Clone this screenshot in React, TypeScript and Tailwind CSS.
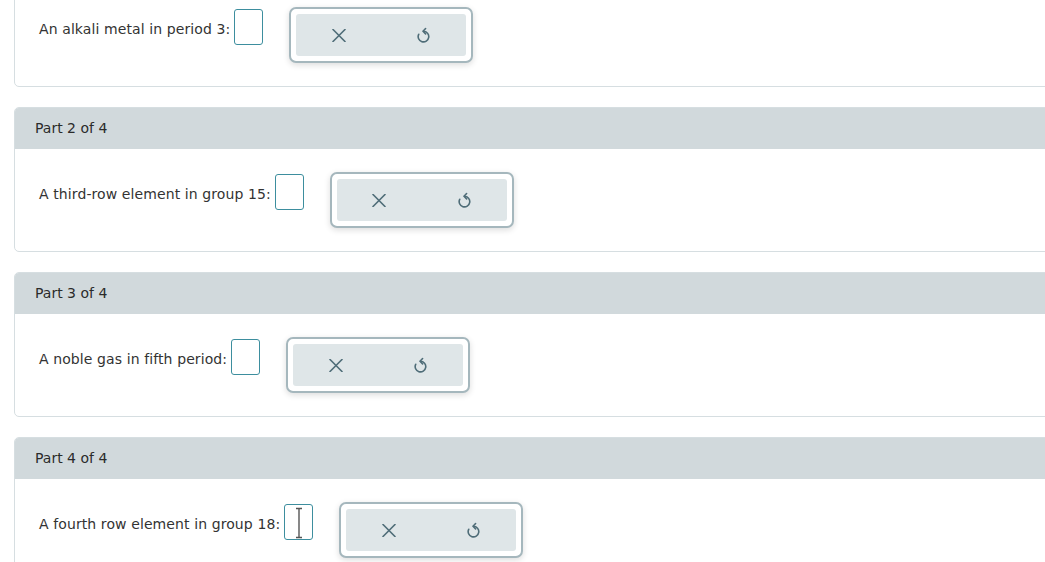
import React from "react";

type Part = {
  label: string;
  prompt: string;
  cursor?: boolean;
};

const parts: Part[] = [
  { label: "Part 1 of 4", prompt: "An alkali metal in period 3:" },
  { label: "Part 2 of 4", prompt: "A third-row element in group 15:" },
  { label: "Part 3 of 4", prompt: "A noble gas in fifth period:" },
  { label: "Part 4 of 4", prompt: "A fourth row element in group 18:", cursor: true },
];

function ClearIcon() {
  return (
    <svg width="14" height="13" viewBox="0 0 14 13" fill="none">
      <path d="M1 0.5 L13 12.5 M13 0.5 L1 12.5" stroke="#4f6d78" strokeWidth="1.6" strokeLinecap="round" />
    </svg>
  );
}

function UndoIcon() {
  return (
    <svg width="13" height="16" viewBox="0 0 13 16" fill="none">
      <path
        d="M6.5 4.3 A5.3 5.3 0 1 1 1.7 7.3"
        stroke="#4f6d78"
        strokeWidth="1.6"
        strokeLinecap="round"
      />
      <path d="M8.6 1.5 L6 4.3 L8.6 7" stroke="#4f6d78" strokeWidth="1.6" strokeLinecap="round" strokeLinejoin="round" />
    </svg>
  );
}

function TextCursor() {
  // mouse I-beam resting over the last answer box
  return (
    <svg
      className="absolute left-1/2 top-[2px] -translate-x-1/2"
      width="9"
      height="32"
      viewBox="0 0 9 32"
      fill="none"
    >
      <path d="M1.5 1.5 H7.5 M4.5 1.5 V30.5 M1.5 30.5 H7.5" stroke="#fff" strokeWidth="3" />
      <path d="M1.5 1.5 H7.5 M4.5 1.5 V30.5 M1.5 30.5 H7.5" stroke="#555" strokeWidth="1.4" />
    </svg>
  );
}

function AnswerRow({ part }: { part: Part }) {
  return (
    <div className="flex items-start pl-[24px]">
      <span className="mt-[12px] text-[14px] leading-5 tracking-[0.1px] text-[#333]">{part.prompt}</span>
      <div className="relative ml-[4px] mt-[2px] h-[36px] w-[29px] rounded-[3px] border border-[#3d8e9e] bg-white">
        {part.cursor && <TextCursor />}
      </div>
      <div className="ml-[26px] rounded-[7px] border-2 border-[#a5b7bd] bg-white p-[5px] shadow-[0_2px_6px_rgba(0,0,0,0.14)]">
        <div className="flex h-[42px] w-[170px] rounded-[3px] bg-[#dfe6e8]">
          <button className="flex flex-1 items-center justify-center">
            <ClearIcon />
          </button>
          <button className="flex flex-1 items-center justify-center">
            <UndoIcon />
          </button>
        </div>
      </div>
    </div>
  );
}

export default function App() {
  return (
    <div
      className="h-[562px] w-[1045px] overflow-hidden bg-white"
      style={{ fontFamily: '"DejaVu Sans", Verdana, sans-serif' }}
    >
      <div className="-mt-[58px] ml-[14px] flex w-[1045px] flex-col gap-[20px]">
        {parts.map((part) => (
          <section key={part.label} className="overflow-hidden rounded-[5px] border border-[#d6dee1] bg-white">
            <div className="flex h-[41px] items-center bg-[#d1d9dc] pl-[20px] text-[14px] text-[#2b2b2b]">
              {part.label}
            </div>
            <div className="pb-[23px] pt-[23px]">
              <AnswerRow part={part} />
            </div>
          </section>
        ))}
      </div>
    </div>
  );
}
